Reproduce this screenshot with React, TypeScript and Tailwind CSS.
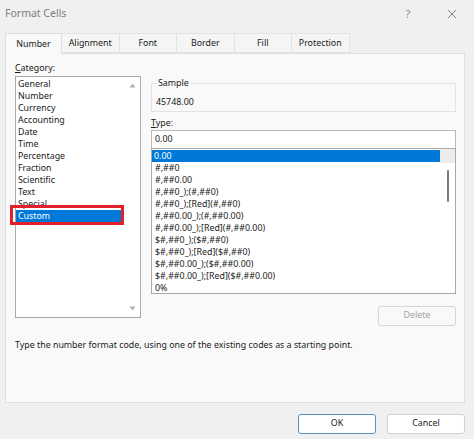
import React from 'react';

const categories = [
  'General',
  'Number',
  'Currency',
  'Accounting',
  'Date',
  'Time',
  'Percentage',
  'Fraction',
  'Scientific',
  'Text',
  'Special',
  'Custom',
];

const formats = [
  '0.00',
  '#,##0',
  '#,##0.00',
  '#,##0_);(#,##0)',
  '#,##0_);[Red](#,##0)',
  '#,##0.00_);(#,##0.00)',
  '#,##0.00_);[Red](#,##0.00)',
  '$#,##0_);($#,##0)',
  '$#,##0_);[Red]($#,##0)',
  '$#,##0.00_);($#,##0.00)',
  '$#,##0.00_);[Red]($#,##0.00)',
  '0%',
];

const tabs = ['Number', 'Alignment', 'Font', 'Border', 'Fill', 'Protection'];

function Arrow({ down }: { down?: boolean }) {
  return (
    <svg width="7" height="5" viewBox="0 0 7 5" className={down ? 'rotate-180' : ''}>
      <path d="M3.5 0.5 L6.5 4.5 L0.5 4.5 Z" fill="#b4b4b4" />
    </svg>
  );
}

export default function App() {
  return (
    <div
      className="relative w-[474px] h-[439px] bg-[#f0f0f0] text-[8.85px] text-[#1a1a1a] flex flex-col overflow-hidden"
      style={{ fontFamily: '"Noto Sans", "Open Sans", sans-serif' }}
    >
      {/* title bar */}
      <div className="h-[28px] flex items-center pl-[5px] shrink-0">
        <span className="text-[10.5px] text-[#7d7d7d]">Format Cells</span>
        <span className="ml-auto w-[10px] text-center text-[11px] text-[#8a8a8a] mr-[34px]">?</span>
        <svg width="10" height="10" viewBox="0 0 10 10" className="mr-[17px]">
          <path d="M1 1 L9 9 M9 1 L1 9" stroke="#777" strokeWidth="0.9" />
        </svg>
      </div>

      {/* tabs */}
      <div className="mt-[5px] ml-[5px] flex h-[20px] shrink-0">
        {tabs.map((t, i) => (
          <div
            key={t}
            className={
              i === 0
                ? 'w-[57px] flex items-center justify-center pt-[2px] bg-[#f9f9f9] border border-b-0 border-[#dedede] relative z-10 h-[21px]'
                : 'w-[57.5px] flex items-center justify-center pt-[2px] bg-[#f5f5f5] border border-l-0 border-[#e2e2e2]'
            }
          >
            {t}
          </div>
        ))}
      </div>

      {/* content panel */}
      <div className="ml-[5px] w-[460px] h-[350px] bg-[#f9f9f9] border border-[#dedede] flex flex-col">
        <div className="flex gap-[10px] pl-[9px] pt-[8px]">
          {/* category column */}
          <div className="w-[126px] flex flex-col">
            <div className="h-[12px] leading-[12px]">
              <span className="underline underline-offset-1">C</span>ategory:
            </div>
            <div className="mt-[2px] h-[242px] bg-white border border-[#a9a9a9] flex">
              <div className="flex-1 pt-[1px]">
                {categories.map((c) => (
                  <div
                    key={c}
                    className={
                      c === 'Custom'
                        ? 'h-[12px] leading-[12px] pl-[2px] mr-[2px] bg-[#0078d7] text-white'
                        : 'h-[12px] leading-[12px] pl-[2px]'
                    }
                  >
                    {c}
                  </div>
                ))}
              </div>
              <div className="w-[16px] flex flex-col items-center justify-between py-[6px]">
                <Arrow />
                <Arrow down />
              </div>
            </div>
          </div>

          {/* right column */}
          <div className="w-[305px] flex flex-col">
            <fieldset className="mt-[15px] h-[35px] border border-[#e3e3e3] px-[4px]">
              <legend className="ml-[1px] px-[1px] h-[12px] leading-[12px]">Sample</legend>
              <div className="pt-[7px] leading-[12px]">45748.00</div>
            </fieldset>
            <div className="mt-[5px] h-[12px] leading-[12px]">
              <span className="underline underline-offset-1">T</span>ype:
            </div>
            <div className="mt-[1px] h-[19px] bg-white border border-[#b9b9b9] flex items-center pl-[3px]">0.00</div>
            <div className="-mt-[1px] h-[146px] bg-white border border-[#a9a9a9] flex">
              <div className="flex-1 pt-[1px]">
                {formats.map((f, i) => (
                  <div
                    key={f}
                    className={
                      i === 0
                        ? 'h-[12px] leading-[12px] pl-[2px] bg-[#0078d7] text-white'
                        : 'h-[12px] leading-[12px] pl-[3px] text-[#222]'
                    }
                  >
                    {f}
                  </div>
                ))}
              </div>
              <div className="w-[15px] flex flex-col items-center">
                <div className="w-full h-[14px] bg-[#ececec]" />
                <div className="mt-[7px] w-[2px] h-[32px] bg-[#7a7a7a] rounded-full" />
              </div>
            </div>
            <div className="mt-[12px] flex justify-end">
              <div className="w-[78px] h-[20px] border border-[#d6d6d6] rounded-[3px] bg-[#f9f9f9] flex items-center justify-center text-[#a3a3a3]">
                Delete
              </div>
            </div>
          </div>
        </div>
        <div className="pl-[9px] mt-[13px] leading-[12px]">
          Type the number format code, using one of the existing codes as a starting point.
        </div>
      </div>

      {/* footer */}
      <div className="mt-[11px] flex justify-end gap-[11px] pr-[9px]">
        <div className="w-[78px] h-[20px] rounded-[3px] bg-white border border-[#5e8fc0] flex items-center justify-center">
          OK
        </div>
        <div className="w-[78px] h-[20px] rounded-[3px] bg-white border border-[#d0d0d0] flex items-center justify-center">
          Cancel
        </div>
      </div>

      {/* red annotation box */}
      <div className="absolute left-[10px] top-[205px] w-[114px] h-[20px] border-[3px] border-[#e2202c]" />
    </div>
  );
}
